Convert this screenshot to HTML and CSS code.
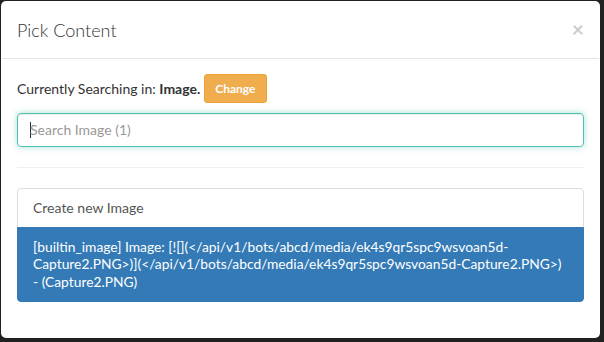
FILE: index.html
```html
<!DOCTYPE html>
<html>
<head>
<meta charset="utf-8">
<link rel="stylesheet" href="styles.css">
</head>
<body>
<div class="modal">
  <div class="modal-header">
    <h4 class="modal-title">Pick Content</h4>
    <button class="close" type="button">×</button>
  </div>
  <div class="modal-body">
    <div class="search-line"><span>Currently Searching in: <strong>Image.</strong></span><button class="btn-change" type="button">Change</button></div>
    <div class="input-box"><span class="caret"></span><span class="placeholder">Search Image (1)</span></div>
    <hr class="divider">
    <div class="list-group">
      <div class="list-item">Create new Image</div>
      <div class="list-item active">[builtin_image] Image: [![](&lt;/api/v1/bots/abcd/media/ek4s9qr5spc9wsvoan5d-Capture2.PNG&gt;)](&lt;/api/v1/bots/abcd/media/ek4s9qr5spc9wsvoan5d-Capture2.PNG&gt;) - (Capture2.PNG)</div>
    </div>
  </div>
</div>
</body>
</html>
```
FILE: styles.css
```css
html, body {
  margin: 0;
  padding: 0;
  background: #212121;
  height: 342px;
  overflow: hidden;
}
body {
  font-family: Lato, "Helvetica Neue", Arial, sans-serif;
  font-size: 14px;
  line-height: 1.42857;
  color: #333;
  padding: 1px;
}
.modal {
  width: 597px;
  height: 335px;
  background: #fff;
  border: 1px solid rgba(255,255,255,0.08);
  border-radius: 5px;
  overflow: hidden;
}
.modal-header {
  display: flex;
  align-items: center;
  justify-content: space-between;
  padding: 15px;
  height: 26px;
  border-bottom: 1px solid #e5e5e5;
}
.modal-title {
  margin: 0;
  font-size: 18px;
  font-weight: 300;
  line-height: 26px;
  color: #333;
}
.close {
  background: none;
  border: 0;
  padding: 0;
  margin-top: -4px;
  font-family: Lato, Arial, sans-serif;
  font-size: 21px;
  font-weight: 700;
  line-height: 1;
  color: #000;
  opacity: 0.2;
}
.modal-body {
  padding: 15px;
}
.search-line {
  margin: 0 0 10px;
  display: flex;
  align-items: center;
  gap: 4px;
  height: 29px;
}
.search-line strong {
  font-weight: 700;
}
.btn-change {
  background: #f0ad4e;
  border: 1px solid #eea236;
  border-radius: 3px;
  color: #fff;
  font-family: Lato, Arial, sans-serif;
  font-size: 12px;
  font-weight: 700;
  height: 29px;
  padding: 0 10px;
  line-height: 1.5;
}
.input-box {
  box-sizing: border-box;
  height: 34px;
  border: 1px solid #4fc1b0;
  border-radius: 4px;
  box-shadow: inset 0 1px 1px rgba(0,0,0,.075), 0 0 6px rgba(79,193,176,.5);
  padding: 6px 12px;
  display: flex;
  align-items: center;
  margin-top: 9px;
  font-size: 14px;
}
.caret {
  width: 1px;
  height: 16px;
  background: #333;
  margin-right: -1px;
}
.placeholder {
  color: #999;
}
.divider {
  margin: 20px 0;
  border: 0;
  border-top: 1px solid #eee;
}
.list-group {
  border-radius: 4px;
}
.list-item {
  padding: 10px 15px;
  border: 1px solid #ddd;
  background: #fff;
  font-size: 14px;
  line-height: 17.7px;
  color: #555;
}
.list-item:first-child {
  border-radius: 4px 4px 0 0;
}
.list-item.active {
  margin-top: -1px;
  background: #337ab7;
  border-color: #337ab7;
  color: #fff;
  font-size: 13.8px;
  border-radius: 0 0 4px 4px;
}
```
